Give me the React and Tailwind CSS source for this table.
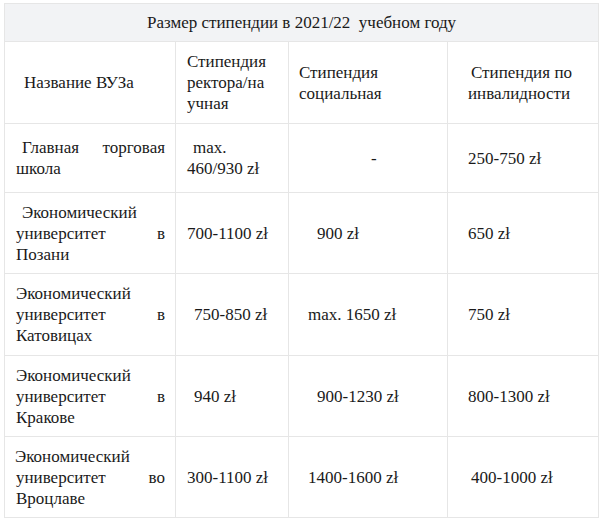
const rows = [
  {
    name: 'Главная торговая школа',
    nameIndent: 'indent-[6px]',
    rector: 'max. 460/930 zł',
    rectorCls: 'indent-[6px] pr-[20px]',
    social: '-',
    socialCls: 'pl-[82px]',
    disab: '250-750 zł',
  },
  {
    name: 'Экономический университет в Позани',
    nameIndent: 'indent-[6px]',
    rector: '700-1100 zł',
    rectorCls: '',
    social: '900 zł',
    socialCls: 'pl-[28px]',
    disab: '650 zł',
  },
  {
    name: 'Экономический университет в Катовицах',
    nameIndent: '',
    rector: '750-850 zł',
    rectorCls: 'indent-[7px]',
    social: 'max. 1650 zł',
    socialCls: 'pl-[19px]',
    disab: '750 zł',
  },
  {
    name: 'Экономический университет в Кракове',
    nameIndent: '',
    rector: '940 zł',
    rectorCls: 'indent-[7px]',
    social: '900-1230 zł',
    socialCls: 'pl-[28px]',
    disab: '800-1300 zł',
  },
  {
    name: 'Экономический университет во Вроцлаве',
    nameIndent: '-indent-[1px]',
    rector: '300-1100 zł',
    rectorCls: '',
    social: '1400-1600 zł',
    socialCls: 'pl-[19px]',
    disab: '400-1000 zł',
    disabCls: 'indent-[3px]',
  },
];

const cell = "border border-[#e6e6e6] align-middle font-['Liberation_Serif',serif]";

export default function App() {
  return (
    <div className="w-[603px] h-[520px] bg-white pt-[3px] pl-[4px] text-[17px] leading-[21px] text-[#1a1a1a] font-['Liberation_Serif',serif]">
      <table className="border-collapse table-fixed w-[594px]">
        <colgroup>
          <col className="w-[171px]" />
          <col className="w-[113px]" />
          <col className="w-[159px]" />
          <col className="w-[151px]" />
        </colgroup>
        <tbody>
          <tr className="h-[38px] bg-[#f2f3f5]">
            <td colSpan={4} className={`${cell} text-center`}>
              Размер стипендии в 2021/22&nbsp; учебном году
            </td>
          </tr>
          <tr className="h-[82px]">
            <td className={`${cell} pl-[19px] pr-[10px]`}>Название ВУЗа</td>
            <td className={`${cell} pl-[11px] pr-[6px]`}>Стипендия ректора/на учная</td>
            <td className={`${cell} pl-[10px] pr-[10px]`}>Стипендия социальная</td>
            <td className={`${cell} pl-[20px] pr-[6px]`}>
              <div className="flex justify-between w-[104px] pl-[3px]">
                <span>Стипендия</span>
                <span>по</span>
              </div>
              <div>инвалидности</div>
            </td>
          </tr>
          {rows.map((r, i) => (
            <tr key={i} className={i === 0 ? 'h-[69px]' : i === 1 || i === 3 || i === 4 ? 'h-[81px]' : 'h-[82px]'}>
              <td className={`${cell} pl-[11px] pr-[10px] text-justify ${r.nameIndent}`}>{r.name}</td>
              <td className={`${cell} pl-[11px] pr-[6px] ${r.rectorCls}`}>{r.rector}</td>
              <td className={`${cell} pl-[10px] pr-[6px] ${r.socialCls}`}>{r.social}</td>
              <td className={`${cell} pl-[20px] pr-[6px] ${r.disabCls || ''}`}>{r.disab}</td>
            </tr>
          ))}
        </tbody>
      </table>
    </div>
  );
}
